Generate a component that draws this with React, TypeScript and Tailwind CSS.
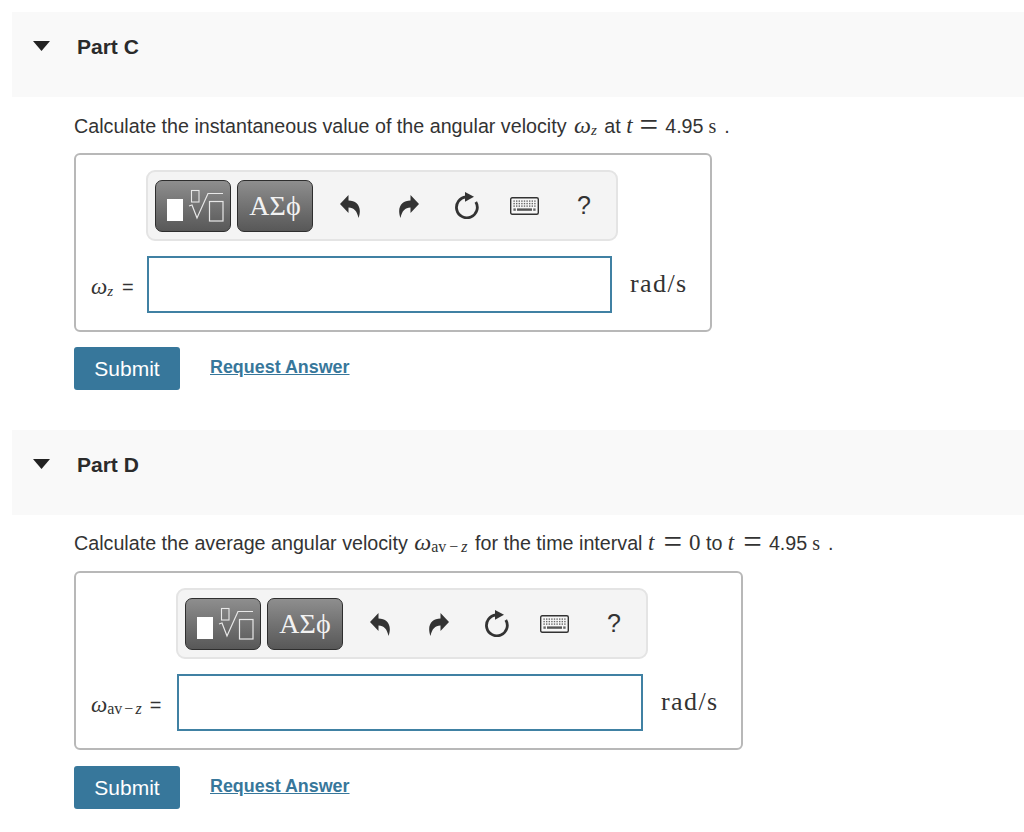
import React from "react";

const sans = "font-['Liberation_Sans',Arial,sans-serif]";
const serif = "font-['Liberation_Serif','Times_New_Roman',serif]";
const mi = `${serif} italic`;

function Arrow({ flip }: { flip?: boolean }) {
  return (
    <svg width="21" height="24" viewBox="0 0 21 24" className={flip ? "-scale-x-100" : ""}>
      <path d="M0 10 L8.5 1 V6.5 C17 6.5 22.5 13 18.5 24 C17 17 14 13.5 8.5 13.5 V19 Z" fill="#333" />
    </svg>
  );
}

function Reset() {
  return (
    <svg width="24" height="27" viewBox="0 0 24 27">
      <path d="M11 5 A10.4 10.4 0 1 0 20.8 10" fill="none" stroke="#333" strokeWidth="2.8" />
      <path d="M10 0 L19 4.7 L10 9.8 Z" fill="#333" />
    </svg>
  );
}

function Keyboard() {
  const keys: React.ReactNode[] = [];
  for (let r = 0; r < 3; r++) {
    for (let c = 0; c < 9; c++) {
      keys.push(<rect key={`${r}-${c}`} x={3.4 + c * 2.6} y={3.4 + r * 2.5} width="1.4" height="1.4" fill="#666" />);
    }
  }
  return (
    <svg width="29" height="18" viewBox="0 0 29 18">
      <rect x="0.7" y="0.7" width="27.6" height="16.6" rx="1.5" fill="#f7f7f7" stroke="#333" strokeWidth="1.4" />
      {keys}
      <rect x="7" y="11.4" width="15" height="2.4" fill="#555" />
      <rect x="3.4" y="11.4" width="2.4" height="2.4" fill="#666" />
      <rect x="23.2" y="11.4" width="2.4" height="2.4" fill="#666" />
    </svg>
  );
}

function Templates() {
  return (
    <svg width="74" height="50" viewBox="0 0 74 50">
      <rect x="11" y="18" width="16" height="22" fill="#fff" />
      <rect x="35.5" y="9.5" width="7.5" height="11.5" fill="none" stroke="#e8e8e8" strokeWidth="1.1" />
      <path d="M33 25 L36 24 L41 37 L52 12.5 H67" fill="none" stroke="#e8e8e8" strokeWidth="1.2" />
      <rect x="53.5" y="20.5" width="13.5" height="19.5" fill="none" stroke="#e8e8e8" strokeWidth="1.2" />
    </svg>
  );
}

function Toolbar() {
  const btn = "h-[52px] w-[76px] rounded-[7px] border border-[#2e2e2e] bg-gradient-to-b from-[#8e8e8e] to-[#585858] flex items-center justify-center";
  return (
    <div className="w-[472px] h-[71px] rounded-[9px] border-2 border-[#e4e4e4] bg-[#f4f4f4] flex items-center pl-[7px]">
      <div className={btn}><Templates /></div>
      <div className={`${btn} ml-[6px] text-[#f2f2f2] text-[28px] ${serif}`}>ΑΣϕ</div>
      <div className="ml-[27px] flex"><Arrow /></div>
      <div className="ml-[37px] flex"><Arrow flip /></div>
      <div className="ml-[36px] flex mb-[1px]"><Reset /></div>
      <div className="ml-[31px] flex mt-[1px]"><Keyboard /></div>
      <div className={`ml-[38px] w-[13px] text-[25px] text-[#333] ${sans}`}>?</div>
    </div>
  );
}

function Eq() {
  return <span className={`${serif} text-[33px] leading-none mx-[7px] align-[-3px]`}>=</span>;
}
function T() {
  return <span className={`${mi} text-[23px] leading-none`}>t</span>;
}
function Sec() {
  return <span className={`${serif} text-[20px] leading-none ml-[5px]`}>s</span>;
}

function Part({ name, prompt, label, offset, inputOffset, boxWidth, submitGap, promptBox }: { name: string; prompt: React.ReactNode; label: React.ReactNode; offset: string; inputOffset: string; boxWidth: string; submitGap: string; promptBox: string }) {
  return (
    <section>
      <div className={`h-[85px] bg-[#f9f9f9] flex items-start ${sans}`}>
        <svg width="17" height="10" viewBox="0 0 17 10" className="ml-[21px] mt-[29px]"><path d="M0 0H17L8.5 10Z" fill="#222" /></svg>
        <h2 className="ml-[27px] mt-[21px] text-[21px] leading-[28px] font-bold text-[#2b2b2b]">{name}</h2>
      </div>
      <div className="pl-[62px]">
        <p className={`${promptBox} text-[19.7px] leading-[28px] text-[#333] whitespace-nowrap ${sans}`}>{prompt}</p>
        <div className={`mt-[13px] ${boxWidth} h-[179px] rounded-[6px] border-2 border-[#b8b8b8] pt-[15px]`}>
          <div className={offset}><Toolbar /></div>
          <div className="mt-[15px] flex items-center relative">
            <div className="absolute left-[15px] top-[14px] text-[#333] whitespace-nowrap">{label}</div>
            <div className={`${inputOffset} h-[57px] border-2 border-[#4081a3] bg-white`} />
            <div className={`ml-[18px] mb-[3px] text-[26px] tracking-[1.4px] text-[#333] ${serif}`}>rad/s</div>
          </div>
        </div>
        <div className={`${submitGap} flex items-center`}>
          <button className={`w-[106px] h-[43px] rounded-[3px] bg-[#37779b] text-white text-[21px] ${sans}`}>Submit</button>
          <a className={`ml-[30px] mb-[2px] text-[17.9px] font-bold text-[#37779b] underline ${sans}`}>Request Answer</a>
        </div>
      </div>
    </section>
  );
}

export default function App() {
  return (
    <div className="w-[1024px] h-[832px] bg-white pt-[12px] pl-[12px] overflow-hidden">
      <Part
        name="Part C"
        prompt={<>Calculate the instantaneous value of the angular velocity <span className={`${mi} text-[24px] leading-none ml-[2px]`}>ω<span className="text-[15px] align-[-2px]">z</span></span> <span className="ml-[2px]">at</span> <T /><Eq />4.95<Sec /><span className="ml-[8px]">.</span></>}
        label={<span className={`${mi} text-[23px]`}>ω<span className="text-[15px] align-[-2px]">z</span><span className={`${sans} not-italic text-[20px] ml-[9px]`}>=</span></span>}
        offset="ml-[70px]"
        inputOffset="ml-[71px] w-[465px]"
        boxWidth="w-[638px]"
        submitGap="mt-[15px]"
        promptBox="mt-[12px] h-[31px]"
      />
      <div className="h-[40px]" />
      <Part
        name="Part D"
        prompt={<>Calculate the average angular velocity <span className={`${mi} text-[24px] leading-none ml-[1px]`}>ω<span className="text-[16px] align-[-2px]"><span className="not-italic">av<span className="mx-[3px]">−</span></span>z</span></span> <span className="ml-[2px]">for the time interval</span> <T /><span className="ml-[2px]"><Eq /></span><span className={`${serif} text-[23px] leading-none`}>0</span> to <T /><span className="ml-[2px]"><Eq /></span>4.95<Sec /><span className="ml-[8px]">.</span></>}
        label={<span className={`${mi} text-[23px]`}>ω<span className="text-[16px] align-[-2px]"><span className="not-italic">av<span className="mx-[2px]">−</span></span>z</span><span className={`${sans} not-italic text-[20px] ml-[8px]`}>=</span></span>}
        offset="ml-[100px]"
        inputOffset="ml-[101px] w-[466px]"
        boxWidth="w-[669px]"
        submitGap="mt-[16px]"
        promptBox="mt-[11px] h-[32px]"
      />
    </div>
  );
}
